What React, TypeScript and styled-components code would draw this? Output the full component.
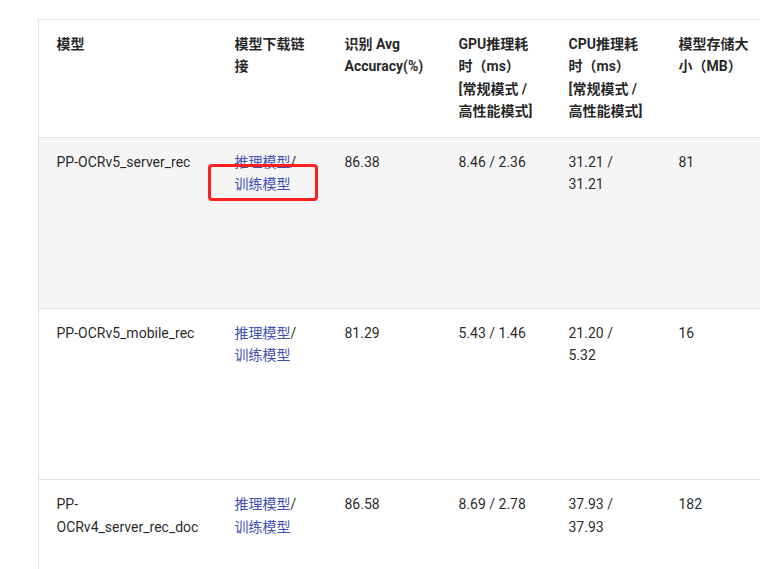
import React from "react";
import styled, { createGlobalStyle } from "styled-components";

const Global = createGlobalStyle`
  html, body { margin: 0; padding: 0; background: #fff; }
  body { overflow: hidden; font-family: Roboto, "Noto Sans CJK SC", sans-serif; }
`;

const Page = styled.div`
  position: relative;
  width: 760px;
  height: 569px;
  overflow: hidden;
  padding: 19px 0 0 38px;
  box-sizing: border-box;
`;

const Table = styled.table`
  border-collapse: separate;
  border-spacing: 0;
  table-layout: fixed;
  width: 1000px;
  border: 1px solid #e0e0e0;
  border-right: none;
  font-size: 14px;
  line-height: 1.6;
  color: rgba(0, 0, 0, 0.87);
`;

const Th = styled.th`
  text-align: left;
  vertical-align: top;
  font-weight: 700;
  padding: 13.1px 17.5px 14.1px;
  border-bottom: 1px solid #e0e0e0;
  color: rgba(0, 0, 0, 0.87);
`;

const Row = styled.tr<{ $shade?: boolean }>`
  background: ${(p) => (p.$shade ? "#f5f5f5" : "#fff")};
`;

const Td = styled.td`
  vertical-align: top;
  padding: 13.1px 17.5px;
  height: 144px;
  box-sizing: content-box;
  border-bottom: 1px solid #e0e0e0;
  word-wrap: break-word;
`;

const Link = styled.a`
  color: #4051b5;
  text-decoration: none;
`;

const Highlight = styled.div`
  position: absolute;
  left: 208px;
  top: 164px;
  width: 110px;
  height: 37px;
  box-sizing: border-box;
  border: 3px solid #ff1f1f;
  border-radius: 4px;
  pointer-events: none;
`;

const rows = [
  { name: "PP-OCRv5_server_rec", acc: "86.38", gpu: "8.46 / 2.36", cpu: "31.21 / 31.21", size: "81" },
  { name: "PP-OCRv5_mobile_rec", acc: "81.29", gpu: "5.43 / 1.46", cpu: "21.20 / 5.32", size: "16" },
  { name: "PP-OCRv4_server_rec_doc", acc: "86.58", gpu: "8.69 / 2.78", cpu: "37.93 / 37.93", size: "182" },
];

export default function App() {
  return (
    <Page>
      <Global />
      <Table>
        <colgroup>
          <col style={{ width: 178 }} />
          <col style={{ width: 110 }} />
          <col style={{ width: 114 }} />
          <col style={{ width: 110 }} />
          <col style={{ width: 110 }} />
          <col style={{ width: 110 }} />
          <col />
        </colgroup>
        <thead>
          <tr>
            <Th>模型</Th>
            <Th>模型下载链接</Th>
            <Th>识别 Avg Accuracy(%)</Th>
            <Th>GPU推理耗时（ms）<br />[常规模式 / 高性能模式]</Th>
            <Th>CPU推理耗时（ms）<br />[常规模式 / 高性能模式]</Th>
            <Th>模型存储大小（MB）</Th>
            <Th>介绍</Th>
          </tr>
        </thead>
        <tbody>
          {rows.map((r, i) => (
            <Row key={r.name} $shade={i === 0}>
              <Td>{r.name}</Td>
              <Td>
                <Link href="#">推理模型</Link>/<Link href="#">训练模型</Link>
              </Td>
              <Td>{r.acc}</Td>
              <Td>{r.gpu}</Td>
              <Td>{r.cpu}</Td>
              <Td>{r.size}</Td>
              <Td></Td>
            </Row>
          ))}
        </tbody>
      </Table>
      <Highlight />
    </Page>
  );
}
